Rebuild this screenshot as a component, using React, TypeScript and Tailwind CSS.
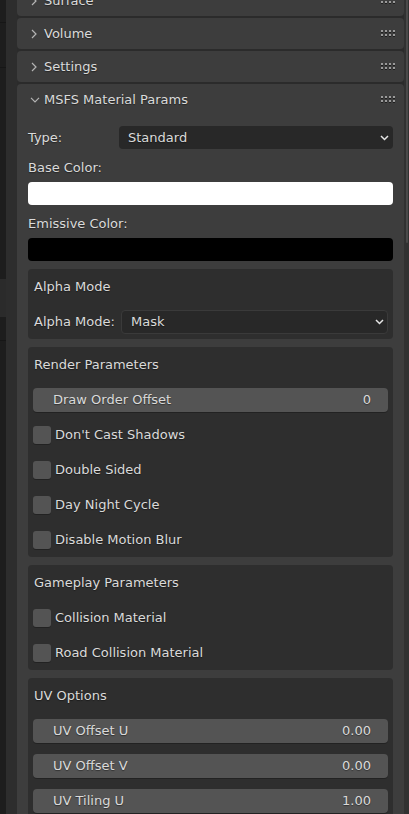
import React from 'react';

const FONT = 'font-["DejaVu_Sans",sans-serif] text-[13px] text-[#dadada] [text-shadow:0_1px_1px_rgba(0,0,0,0.4)]';

function ChevronRight() {
  return (
    <svg width="6" height="10" viewBox="0 0 6 10" className="shrink-0">
      <path d="M1 1 L5 5 L1 9" fill="none" stroke="#b4b4b4" strokeWidth="1.2" />
    </svg>
  );
}

function ChevronDown() {
  return (
    <svg width="10" height="6" viewBox="0 0 10 6" className="shrink-0">
      <path d="M1 0.8 L5 4.8 L9 0.8" fill="none" stroke="#b4b4b4" strokeWidth="1.2" />
    </svg>
  );
}

function DropChevron() {
  return (
    <svg width="9" height="6" viewBox="0 0 9 6" className="shrink-0">
      <path d="M1 1 L4.5 4.5 L8 1" fill="none" stroke="#e6e6e6" strokeWidth="1.5" />
    </svg>
  );
}

function DragHandle() {
  const cols = [0, 4, 8, 12];
  const rows = [0, 4];
  return (
    <svg width="14" height="7" viewBox="0 0 14 7" className="shrink-0">
      {rows.map((r) =>
        cols.map((c) => (
          <g key={`${r}-${c}`}>
            <rect x={c} y={r + 1} width="2" height="2" fill="#1e1e1e" />
            <rect x={c} y={r} width="2" height="2" fill="#9a9a9a" />
          </g>
        ))
      )}
    </svg>
  );
}

function CollapsedHeader({ title }: { title: string }) {
  return (
    <div className="h-[31px] shrink-0 rounded-[4px] bg-[#3d3d3d] flex items-center pl-[14px] pr-[9px]">
      <div className="w-[13px] flex items-center">
        <ChevronRight />
      </div>
      <span className={`${FONT} flex-1`}>{title}</span>
      <DragHandle />
    </div>
  );
}

function Slider({ label, value }: { label: string; value: string }) {
  return (
    <div className="h-[24px] w-full rounded-[4px] bg-[#545454] flex items-center justify-between pl-[20px] pr-[17px] shadow-[0_1px_0_rgba(0,0,0,0.25)]">
      <span className={FONT}>{label}</span>
      <span className={FONT}>{value}</span>
    </div>
  );
}

function Checkbox({ label }: { label: string }) {
  return (
    <div className="flex items-center gap-[4px]">
      <div className="w-[18px] h-[18px] rounded-[3px] bg-[#545454] shadow-[0_1px_0_rgba(0,0,0,0.25)]" />
      <span className={FONT}>{label}</span>
    </div>
  );
}

function Row({ children }: { children: React.ReactNode }) {
  return <div className="h-[35px] shrink-0 flex items-center px-[5px]">{children}</div>;
}

function SubPanel({ title, children }: { title: string; children: React.ReactNode }) {
  return (
    <div className="mt-[8px] rounded-[4px] bg-[#2e2e2e] flex flex-col">
      <div className="h-[35px] shrink-0 flex items-center pl-[6px]">
        <span className={FONT}>{title}</span>
      </div>
      {children}
    </div>
  );
}

export default function App() {
  return (
    <div className="w-[409px] h-[814px] overflow-hidden flex bg-[#2b2b2b]">
      {/* left editor edge */}
      <div className="w-[17px] shrink-0 flex">
        <div className="w-[6px] bg-[#1d1d1d] flex flex-col">
          <div className="h-[23px] border-b border-[#161616]" />
          <div className="h-[45px] border-b border-[#161616]" />
          <div className="h-[211px]" />
          <div className="h-[38px] bg-[#2b2b2b]" />
          <div className="h-[24px] border-b border-[#161616]" />
          <div className="flex-1" />
        </div>
        <div className="w-[11px] bg-[#2d2d2d]" />
      </div>

      {/* panels */}
      <div className="flex-1 flex flex-col gap-[2px] mt-[-15px]">
        <CollapsedHeader title="Surface" />
        <CollapsedHeader title="Volume" />
        <CollapsedHeader title="Settings" />

        <div className="flex-1 rounded-t-[4px] bg-[#3d3d3d] flex flex-col">
          <div className="h-[31px] shrink-0 flex items-center pl-[13px] pr-[9px]">
            <div className="w-[14px] flex items-center">
              <ChevronDown />
            </div>
            <span className={`${FONT} flex-1`}>MSFS Material Params</span>
            <DragHandle />
          </div>

          <div className="flex flex-col px-[11px] pt-[11px]">
            <div className="h-[23px] flex items-center">
              <span className={`${FONT} w-[91px]`}>Type:</span>
              <div className="flex-1 h-[23px] rounded-[4px] bg-[#282828] flex items-center justify-between pl-[9px] pr-[4px]">
                <span className={FONT}>Standard</span>
                <DropChevron />
              </div>
            </div>

            <div className="mt-[9px] h-[20px] flex items-center">
              <span className={FONT}>Base Color:</span>
            </div>
            <div className="mt-[4px] h-[23px] rounded-[4px] bg-white" />

            <div className="mt-[9px] h-[20px] flex items-center">
              <span className={FONT}>Emissive Color:</span>
            </div>
            <div className="mt-[4px] h-[23px] rounded-[4px] bg-black" />

            <SubPanel title="Alpha Mode">
              <Row>
                <span className={`${FONT} w-[88px] pl-[1px]`}>Alpha Mode:</span>
                <div className="flex-1 h-[24px] rounded-[4px] bg-[#282828] border border-[#3a3a3a] flex items-center justify-between pl-[9px] pr-[3px]">
                  <span className={FONT}>Mask</span>
                  <DropChevron />
                </div>
              </Row>
            </SubPanel>

            <SubPanel title="Render Parameters">
              <Row>
                <Slider label="Draw Order Offset" value="0" />
              </Row>
              <Row>
                <Checkbox label="Don't Cast Shadows" />
              </Row>
              <Row>
                <Checkbox label="Double Sided" />
              </Row>
              <Row>
                <Checkbox label="Day Night Cycle" />
              </Row>
              <Row>
                <Checkbox label="Disable Motion Blur" />
              </Row>
            </SubPanel>

            <SubPanel title="Gameplay Parameters">
              <Row>
                <Checkbox label="Collision Material" />
              </Row>
              <Row>
                <Checkbox label="Road Collision Material" />
              </Row>
            </SubPanel>

            <SubPanel title="UV Options">
              <Row>
                <Slider label="UV Offset U" value="0.00" />
              </Row>
              <Row>
                <Slider label="UV Offset V" value="0.00" />
              </Row>
              <Row>
                <Slider label="UV Tiling U" value="1.00" />
              </Row>
            </SubPanel>
          </div>
        </div>
      </div>

      {/* scrollbar strip */}
      <div className="w-[5px] shrink-0 bg-[#313131] flex justify-end pr-[1px]">
        <div className="w-[2px] h-[243px] rounded-b-[1px] bg-[#4a4a4a]" />
      </div>
    </div>
  );
}
